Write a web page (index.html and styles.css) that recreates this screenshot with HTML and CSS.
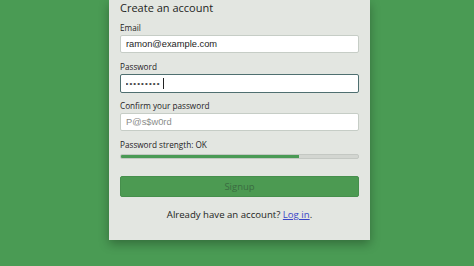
FILE: index.html
```html
<!DOCTYPE html>
<html>
<head>
  <title>Create an account</title>
  <link rel="stylesheet" href="styles.css">
</head>
<body>
  <div class="card">
    <h2 class="title">Create an account</h2>

    <form class="signup-form" onsubmit="return false">
      <label class="field-label" for="email">Email</label>
      <input class="field-input" id="email" type="email" value="ramon@example.com">

      <label class="field-label" for="password">Password</label>
      <div class="input-wrap">
        <input class="field-input focused" id="password" type="password" value="secretpwd">
        <span class="caret"></span>
      </div>

      <label class="field-label" for="confirm">Confirm your password</label>
      <input class="field-input" id="confirm" type="password" placeholder="P@s$w0rd">

      <div class="field-label">Password strength: OK</div>
      <div class="strength">
        <div class="strength-fill" style="width: 75%;"></div>
      </div>

      <button class="signup-btn" type="submit">Signup</button>
    </form>

    <p class="login-note">Already have an account? <a href="#">Log in</a>.</p>
  </div>
</body>
</html>
```

FILE: styles.css
```css
body {
  margin: 0;
  background-color: #4a9b54;
  font-family: "Open Sans", "Noto Sans", sans-serif;
  height: 266px;
  overflow: hidden;
}
.card {
  width: 239px;
  margin-left: 109px;
  padding: 0 11px 18px;
  background-color: #e3e6e1;
  box-shadow: 0 4px 10px rgba(0,0,0,0.3);
}
.title {
  margin: 0 0 6px;
  font-size: 11px;
  line-height: 16px;
  font-weight: normal;
  color: #1d1f1d;
}
.signup-form {
  display: flex;
  flex-direction: column;
}
.field-label {
  display: block;
  font-size: 8.2px;
  line-height: 11px;
  color: #1f221f;
  margin-bottom: 2px;
}
.field-input {
  display: block;
  box-sizing: border-box;
  width: 100%;
  height: 18px;
  margin: 0 0 8px;
  padding: 0 5px;
  border: 1px solid #c6cdc6;
  border-radius: 2px;
  background-color: #fff;
  font-family: "Liberation Sans", Arial, sans-serif;
  font-size: 9.3px;
  color: #222;
  outline: none;
}
.field-input::placeholder {
  color: #8a8d8a;
}
.field-input.focused {
  height: 19px;
  margin-bottom: 7px;
  border: 1.5px solid #4f6f70;
  padding-left: 4.5px;
  font-size: 8px;
  letter-spacing: 1.1px;
  color: #444;
}
.input-wrap {
  position: relative;
}
.caret {
  position: absolute;
  left: 43px;
  top: 4px;
  width: 1px;
  height: 11px;
  background-color: #222;
}
.strength {
  height: 3px;
  margin-top: 2px;
  background-color: #d3d6d1;
  border: 0.5px solid #c4c8c3;
  border-radius: 2px;
  overflow: hidden;
}
.strength-fill {
  height: 100%;
  background-color: #4a9a55;
}
.signup-btn {
  height: 21px;
  margin-top: 17px;
  border: 1px solid #468f4c;
  border-radius: 2px;
  background-color: #4c9a52;
  color: #3a6c41;
  font-family: "Open Sans", "Noto Sans", sans-serif;
  font-size: 9.5px;
}
.login-note {
  margin: 11px 0 0;
  text-align: center;
  font-size: 9.6px;
  line-height: 14px;
  color: #1d1f1d;
}
.login-note a {
  color: #3a45c8;
}
```
